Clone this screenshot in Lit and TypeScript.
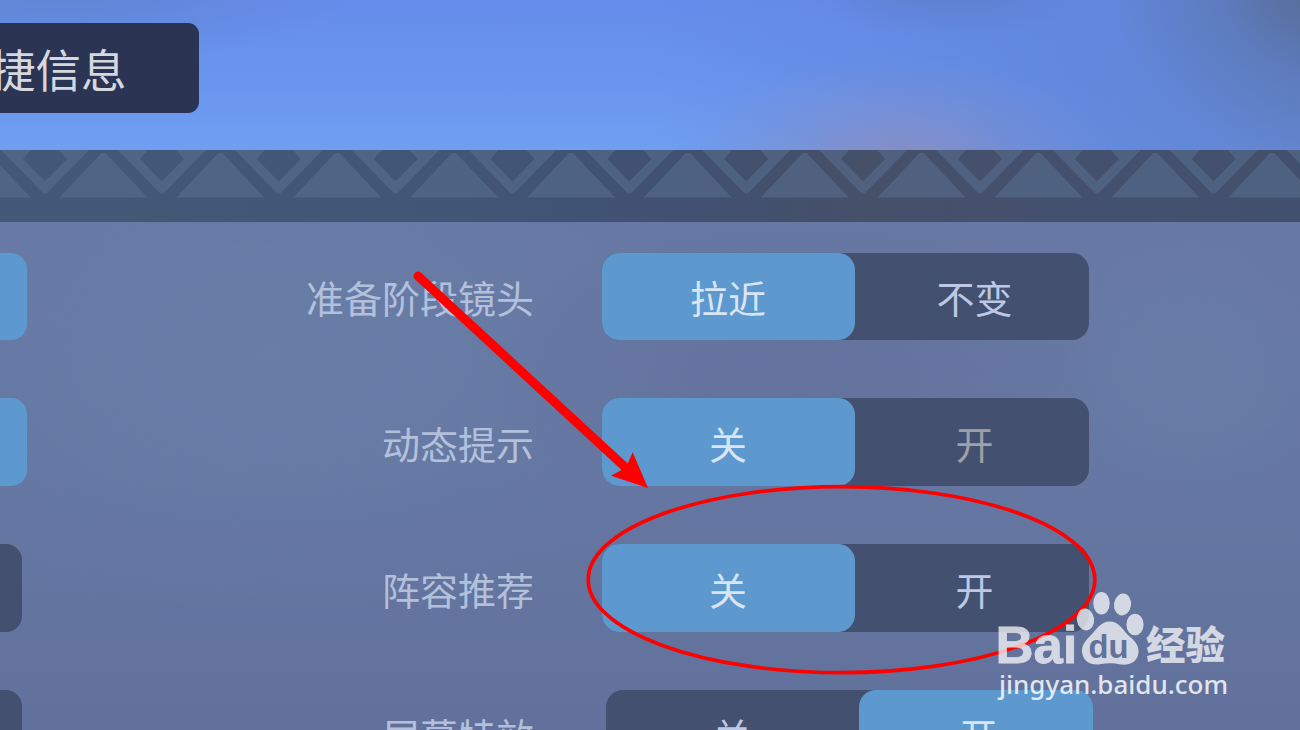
import { LitElement, html, css, svg } from "lit";
import { customElement } from "lit/decorators.js";
import { classMap } from "lit/directives/class-map.js";

interface Setting {
  label: string;
  options: [string, string];
  active: 0 | 1;
  muted?: boolean;
  edge: "on" | "off";
}

const SETTINGS: Setting[] = [
  { label: "准备阶段镜头", options: ["拉近", "不变"], active: 0, edge: "on" },
  { label: "动态提示", options: ["关", "开"], active: 0, muted: true, edge: "on" },
  { label: "阵容推荐", options: ["关", "开"], active: 0, edge: "off" },
  { label: "屏幕特效", options: ["关", "开"], active: 1, edge: "off" },
];

@customElement("app-root")
export class AppRoot extends LitElement {
  static styles = css`
    :host {
      display: block;
      position: relative;
      width: 1300px;
      height: 730px;
      overflow: hidden;
      font-family: "Noto Sans CJK SC", "Noto Sans", sans-serif;
      font-weight: 400;
      background: #64749f;
    }
    .page {
      display: flex;
      flex-direction: column;
      height: 100%;
    }
    .sky {
      box-sizing: border-box;
      flex: none;
      height: 149.5px;
      padding-top: 22.5px;
      background:
        radial-gradient(ellipse 220px 115px at 900px 170px, rgba(142, 140, 186, 0.9), rgba(138, 144, 196, 0.35) 55%, rgba(130, 145, 205, 0) 100%),
        radial-gradient(ellipse 220px 190px at 1330px -20px, #54698e, rgba(86, 112, 160, 0.45) 50%, rgba(92, 122, 190, 0) 100%),
        radial-gradient(ellipse 140px 50px at 950px -12px, rgba(94, 124, 200, 0.8), rgba(96, 130, 215, 0) 100%),
        radial-gradient(ellipse 300px 80px at 60px -15px, rgba(94, 132, 205, 0.85), rgba(100, 140, 225, 0) 100%),
        linear-gradient(90deg, rgba(96, 132, 222, 0) 50%, rgba(96, 134, 220, 0.8) 80%, rgba(98, 130, 205, 0.85) 100%),
        linear-gradient(180deg, #668cec 0%, #6994ee 50%, #709ff1 100%);
    }
    .tab {
      box-sizing: border-box;
      width: 198.5px;
      height: 90.5px;
      padding-right: 72px;
      border-radius: 0 11px 11px 0;
      background: #2b3453;
      color: #d6d8df;
      font-size: 45.5px;
      line-height: 91px;
      display: flex;
      justify-content: flex-end;
      white-space: nowrap;
      overflow: hidden;
    }
    .frieze {
      flex: none;
      display: block;
      width: 1300px;
      height: 72px;
      background: linear-gradient(90deg, #445878 0%, #425777 30%, #405173 50%, #455069 66%, #44506d 78%, #42506f 100%);
    }
    .weave { fill: rgba(94, 118, 150, 0.46); }
    .panel {
      flex: 1;
      min-height: 0;
      box-sizing: border-box;
      padding-top: 31px;
      overflow: hidden;
      display: flex;
      flex-direction: column;
      gap: 58px;
      background:
        radial-gradient(ellipse 170px 150px at 1190px 150px, rgba(104, 126, 166, 0.85), rgba(104, 126, 166, 0)),
        radial-gradient(ellipse 320px 150px at 800px 150px, rgba(98, 112, 154, 0.7), rgba(98, 112, 154, 0)),
        radial-gradient(ellipse 420px 270px at 270px 130px, rgba(104, 126, 166, 0.9), rgba(104, 126, 166, 0)),
        linear-gradient(180deg, #6778a4 0%, #6577a2 50%, #61719b 100%);
    }
    .row {
      flex: none;
      display: flex;
      height: 88px;
    }
    .row:first-child { height: 87px; }
    .edge {
      flex: none;
      width: 26.5px;
      border-radius: 0 16px 16px 0;
      background: #5d99cf;
    }
    .edge.off {
      width: 22px;
      background: #43506f;
    }
    .label {
      flex: none;
      width: 507.5px;
      text-align: right;
      font-size: 38px;
      line-height: 89px;
      color: #b3c0dc;
      white-space: nowrap;
    }
    .edge.off + .label { width: 512px; }
    .toggle {
      flex: none;
      display: flex;
      width: 487px;
      margin-left: 68px;
      border-radius: 17px;
      background: #43506f;
    }
    .toggle.second { margin-left: 72px; }
    .option {
      flex: none;
      width: 253px;
      box-sizing: border-box;
      border-radius: 17px;
      text-align: center;
      font-size: 38px;
      line-height: 89px;
      color: #bcc8e5;
    }
    .option:first-child { padding-right: 1px; }
    .option:last-child {
      width: 234px;
      padding-left: 5px;
    }
    .option.on {
      background: #5d99cf;
      color: #d9e5f3;
    }
    .option.muted { color: #9fa1a8; }
    .row:first-child .label,
    .row:first-child .option { line-height: 88px; }
    .overlay {
      position: absolute;
      left: 0;
      top: 0;
      width: 1300px;
      height: 730px;
    }
    .ring { fill: none; stroke: #f00; stroke-width: 3.7; }
    .shaft { stroke: #f00; stroke-width: 9; stroke-linecap: round; }
    .head { fill: #f00; }
    .mark { fill: #fff; opacity: 0.72; }
    .brand { font: 700 52.5px "Liberation Sans", sans-serif; stroke: #fff; stroke-width: 0.8; }
    .brand-cn { font: 900 39px "Noto Sans CJK SC", sans-serif; }
    .brand-du { font: 700 34px "Liberation Sans", sans-serif; fill: #62729b; }
    .site { font: 500 26px "Noto Sans", sans-serif; fill: #fff; opacity: 0.82; }
  `;

  private frieze() {
    const period = 116.87;
    return html`<svg class="frieze" viewBox="0 0 1300 72">
      ${Array.from({ length: 13 }, (_, i) => {
        const x = 45 + (i - 1) * period;
        return svg`<g transform="translate(${x} 0)">
          <path class="weave" d="M-44 0H-14L-22 9L0 31.500L22 9L14 0H44L1.500 43.500H-1.500Z"/>
          <path class="weave" d="M56.500 3H60.500L102.500 47.500H14.500Z"/>
        </g>`;
      })}
    </svg>`;
  }

  private row(s: Setting) {
    return html`<div class="row">
      <div class=${classMap({ edge: true, off: s.edge === "off" })}></div>
      <div class="label">${s.label}</div>
      <div class=${classMap({ toggle: true, second: s.active === 1 })}>
        ${s.options.map(
          (o, i) => html`<div class=${classMap({ option: true, on: s.active === i, muted: !!s.muted && i === 1 })}>${o}</div>`
        )}
      </div>
    </div>`;
  }

  render() {
    return html`
      <div class="page">
        <div class="sky"><div class="tab">快捷信息</div></div>
        ${this.frieze()}
        <div class="panel">${SETTINGS.map((s) => this.row(s))}</div>
      </div>
      <svg class="overlay" viewBox="0 0 1300 730">
        <ellipse class="ring" cx="841.5" cy="579.7" rx="253.3" ry="93" />
        <line class="shaft" x1="418" y1="276" x2="626" y2="468" />
        <path class="head" d="M648 488L632.7 452.3L627.5 464L620.5 470.5L611 475.7Z" />
        <g class="mark">
          <text class="brand" x="995.5" y="663" textLength="82" lengthAdjust="spacingAndGlyphs">Bai</text>
          <ellipse cx="1085.5" cy="619.5" rx="8.6" ry="11" transform="rotate(-8 1085.5 619.5)" />
          <ellipse cx="1101.5" cy="603.3" rx="8.2" ry="11.3" />
          <ellipse cx="1122.5" cy="604.5" rx="8.5" ry="11" transform="rotate(8 1122.5 604.5)" />
          <ellipse cx="1135" cy="624.5" rx="8.6" ry="10.8" />
          <path d="M1109.5 621.5C1119 621.5 1122 629 1128 635C1134 640 1139 645 1138.5 652C1138 661 1131 665.5 1121 664.5C1113 663 1107 663 1100 664.3C1090 665.5 1083 661 1082 652C1081.5 645 1086 640 1091 635C1097 629 1101 621.5 1109.5 621.5Z" />
          <text class="brand-cn" x="1146" y="659" textLength="79" lengthAdjust="spacingAndGlyphs">经验</text>
        </g>
        <text class="brand-du" x="1088.5" y="658" textLength="40" lengthAdjust="spacingAndGlyphs">du</text>
        <text class="site" x="999" y="694" textLength="229" lengthAdjust="spacingAndGlyphs">jingyan.baidu.com</text>
      </svg>
    `;
  }
}
